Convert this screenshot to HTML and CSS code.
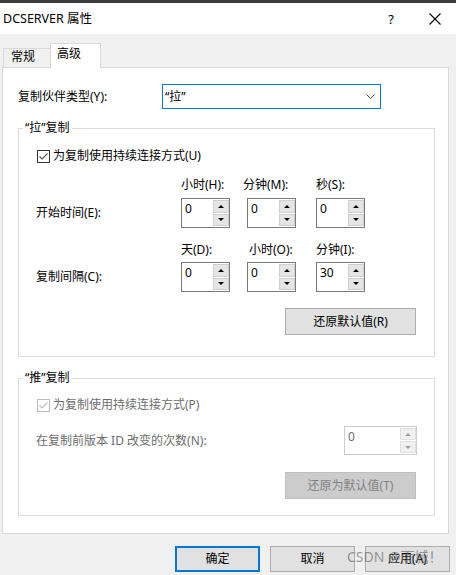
FILE: index.html
```html
<!DOCTYPE html>
<html lang="zh-CN">
<head>
<meta charset="utf-8">
<title>DCSERVER 属性</title>
<link rel="stylesheet" href="styles.css">
</head>
<body>
<div class="topbar"></div>
<div class="titlebar">
  <span class="title">DCSERVER 属性</span>
  <div class="title-actions">
    <span class="help">?</span>
    <svg class="close" width="12" height="12" viewBox="0 0 12 12"><path d="M0.5 0.5 L11.5 11.5 M11.5 0.5 L0.5 11.5" stroke="#000" stroke-width="1.1" fill="none"/></svg>
  </div>
</div>
<div class="content">
  <div class="tabs">
    <div class="tab">常规</div>
    <div class="tab active">高级</div>
  </div>
  <div class="panel">
    <div class="partner-row">
      <span class="partner-label">复制伙伴类型(Y):</span>
      <div class="combo">
        <span>“拉”</span>
        <svg width="9" height="5" viewBox="0 0 9 5"><path d="M0.5 0.5 L4.5 4.5 L8.5 0.5" stroke="#444" stroke-width="1" fill="none"/></svg>
      </div>
    </div>

    <fieldset class="group group-pull">
      <legend>“拉”复制</legend>
      <div class="check-row">
        <span class="checkbox"><svg width="11" height="11" viewBox="0 0 11 11"><path d="M1.5 5.5 L4 8 L9.5 2.5" stroke="#555" stroke-width="1.1" fill="none"/></svg></span>
        <span>为复制使用持续连接方式(U)</span>
      </div>
      <div class="time-grid">
        <span class="unit-label r1 c2">小时(H):</span>
        <span class="unit-label r1 c3 shift-left">分钟(M):</span>
        <span class="unit-label r1 c4">秒(S):</span>

        <span class="row-label r2">开始时间(E):</span>
        <div class="spin r2 c2"><span class="spin-val">0</span><span class="spin-btns"><span class="sb"><i class="up"></i></span><span class="sb"><i class="down"></i></span></span></div>
        <div class="spin r2 c3"><span class="spin-val">0</span><span class="spin-btns"><span class="sb"><i class="up"></i></span><span class="sb"><i class="down"></i></span></span></div>
        <div class="spin r2 c4"><span class="spin-val">0</span><span class="spin-btns"><span class="sb"><i class="up"></i></span><span class="sb"><i class="down"></i></span></span></div>

        <span class="unit-label r3 c2 low">天(D):</span>
        <span class="unit-label r3 c3 low shift-right">小时(O):</span>
        <span class="unit-label r3 c4 low">分钟(I):</span>

        <span class="row-label r4">复制间隔(C):</span>
        <div class="spin r4 c2"><span class="spin-val">0</span><span class="spin-btns"><span class="sb"><i class="up"></i></span><span class="sb"><i class="down"></i></span></span></div>
        <div class="spin r4 c3"><span class="spin-val">0</span><span class="spin-btns"><span class="sb"><i class="up"></i></span><span class="sb"><i class="down"></i></span></span></div>
        <div class="spin r4 c4"><span class="spin-val">30</span><span class="spin-btns"><span class="sb"><i class="up"></i></span><span class="sb"><i class="down"></i></span></span></div>
      </div>
      <div class="btn-row"><button class="btn reset">还原默认值(R)</button></div>
    </fieldset>

    <fieldset class="group group-push">
      <legend>“推”复制</legend>
      <div class="check-row disabled">
        <span class="checkbox"><svg width="11" height="11" viewBox="0 0 11 11"><path d="M1.5 5.5 L4 8 L9.5 2.5" stroke="#bcbcbc" stroke-width="1.1" fill="none"/></svg></span>
        <span>为复制使用持续连接方式(P)</span>
      </div>
      <div class="id-row">
        <span class="muted">在复制前版本 ID 改变的次数(N):</span>
        <div class="spin wide disabled"><span class="spin-val">0</span><span class="spin-btns"><span class="sb"><i class="up"></i></span><span class="sb"><i class="down"></i></span></span></div>
      </div>
      <div class="btn-row push-btn"><button class="btn reset" disabled>还原为默认值(T)</button></div>
    </fieldset>
  </div>

  <div class="footer">
    <button class="btn dlg primary">确定</button>
    <button class="btn dlg">取消</button>
    <button class="btn dlg">应用(A)</button>
  </div>
</div>
<div class="watermark">CSDN @雨城！</div>
</body>
</html>
```

FILE: styles.css
```css
* { box-sizing: border-box; }
html, body { margin: 0; padding: 0; }
body {
  width: 456px;
  height: 575px;
  overflow: hidden;
  position: relative;
  background: #f0f0f0;
  color: #000;
  font-family: "Noto Sans", "Noto Sans CJK SC", sans-serif;
  font-size: 12px;
  line-height: 16px;
}

.topbar { height: 3px; background: #3b3b3b; }

.titlebar {
  height: 31px;
  background: #fff;
  display: flex;
  align-items: center;
  padding: 1px 15px 0 3px;
}
.title { font-size: 12.5px; }
.title-actions { margin-left: auto; display: flex; align-items: center; gap: 35px; }
.help { font-size: 13px; }
.close { display: block; }

.content { background: #f0f0f0; }

.tabs {
  display: flex;
  align-items: flex-end;
  height: 33px;
  padding-left: 3px;
}
.tab {
  width: 47px;
  height: 19px;
  padding-left: 7px;
  border: 1px solid #d9d9d9;
  border-right: none;
  border-bottom: none;
  background: #f0f0f0;
}
.tab.active {
  width: 51px;
  height: 25px;
  padding: 2px 0 0 6px;
  border-right: 1px solid #d9d9d9;
  background: #fff;
  margin-bottom: -1px;
  position: relative;
  z-index: 1;
}

.panel {
  margin-left: 2px;
  width: 447px;
  background: #fff;
  border: 1px solid #d9d9d9;
  padding: 16px 13px 17px 15px;
}

.partner-row { display: flex; align-items: center; height: 25px; }
.partner-label { width: 144px; }
.combo {
  width: 219px;
  height: 25px;
  border: 1px solid #0078d7;
  display: flex;
  align-items: center;
  justify-content: space-between;
  padding: 0 5px 0 2px;
}
.combo svg { display: block; }

.group {
  margin: 0;
  padding: 0 18px;
  border: 1px solid #dcdcdc;
  min-width: 0;
}
.group legend {
  padding: 0 2px;
  margin-left: -14px;
  line-height: 16px;
}
.group-pull { margin-top: 11px; padding-bottom: 21px; }
.group-push { margin-top: 13px; padding-bottom: 16px; }

.check-row { display: flex; align-items: center; height: 16px; margin-top: 12px; }
.group-push .check-row { margin-top: 11px; }
.checkbox {
  width: 13px;
  height: 13px;
  border: 1px solid #333;
  margin-right: 3px;
  display: flex;
  align-items: center;
  justify-content: center;
  background: #fff;
}
.checkbox svg { display: block; }
.check-row.disabled { color: #6d6d6d; }
.check-row.disabled .checkbox { border-color: #bcbcbc; }

.time-grid {
  display: grid;
  grid-template-columns: 144px 66px 69px 49px;
  grid-template-rows: 21px 30px 34px 30px;
  margin-top: 13px;
}
.r1 { grid-row: 1; }
.r2 { grid-row: 2; }
.r3 { grid-row: 3; }
.r4 { grid-row: 4; }
.c2 { grid-column: 2; }
.c3 { grid-column: 3; }
.c4 { grid-column: 4; }
.unit-label { align-self: end; margin-bottom: 5px; white-space: nowrap; }
.unit-label.low { margin-bottom: 4px; }
.shift-left { margin-left: -4px; }
.shift-right { margin-left: 2px; }
.row-label { grid-column: 1; align-self: center; margin-left: -1px; }

.spin {
  width: 49px;
  height: 30px;
  border: 1px solid #7a7a7a;
  background: #fff;
  display: flex;
}
.spin-val { flex: 1; padding: 2px 0 0 3px; }
.spin-btns {
  width: 16px;
  display: flex;
  flex-direction: column;
  gap: 1px;
  padding: 1px 0 1px 0;
}
.sb {
  flex: 1;
  background: #e5e5e5;
  border: 1px solid #cfcfcf;
  display: flex;
  align-items: center;
  justify-content: center;
}
.sb i { display: block; width: 0; height: 0; border-left: 3px solid transparent; border-right: 3px solid transparent; }
.sb .up { border-bottom: 3px solid #000; }
.sb .down { border-top: 3px solid #000; }

.spin.wide { width: 73px; height: 29px; }
.spin.disabled { border-color: #cccccc; color: #6d6d6d; }
.spin.disabled .sb { background: #f0f0f0; border-color: #e0e0e0; }
.spin.disabled .sb .up { border-bottom-color: #a0a0a0; }
.spin.disabled .sb .down { border-top-color: #a0a0a0; }

.id-row {
  display: flex;
  align-items: center;
  justify-content: space-between;
  margin-top: 13px;
  margin-right: -1px;
}
.muted { color: #6d6d6d; margin-left: -1px; }

.btn-row { display: flex; justify-content: flex-end; margin-top: 16px; }
.btn-row.push-btn { margin-top: 17px; }

.btn {
  font: inherit;
  line-height: 16px;
  margin: 0;
  padding: 0;
  color: #000;
  background: #e1e1e1;
  border: 1px solid #adadad;
}
.btn.reset { width: 131px; height: 27px; }
.btn.reset:disabled { background: #cccccc; border-color: #bfbfbf; color: #838383; }

.footer {
  display: flex;
  justify-content: flex-end;
  gap: 10px;
  padding-right: 6px;
  margin-top: 12px;
}
.btn.dlg { width: 85px; height: 26px; }
.btn.primary { border: 2px solid #0078d7; }

.watermark {
  position: absolute;
  left: 347px;
  top: 549px;
  font-size: 14px;
  line-height: 16px;
  color: rgba(110, 110, 110, 0.7);
  white-space: nowrap;
  pointer-events: none;
}
```
